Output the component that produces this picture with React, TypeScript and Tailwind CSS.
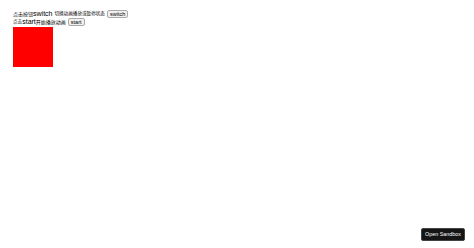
export default function App() {
  return (
    <div className="relative h-[248px] w-[474px] bg-white font-['Liberation_Sans','Noto_Sans_CJK_SC',sans-serif] text-[7px] leading-[8px] text-black">
      <div className="px-[13px] pt-[10px]">
        <div className="flex items-center">
          <span className="text-[5px]">点击按钮</span>
          <span>switch&nbsp;</span>
          <span className="text-[4.6px]">切换动画播放或暂停状态</span>
          <button className="ml-[2px] h-[8px] rounded-[2px] border border-[#aaa] bg-[#f0f0f0] px-[2px] text-[5.5px] leading-[6px]">
            switch
          </button>
        </div>
        <div className="flex items-center">
          <span className="text-[4.6px]">点击</span>
          <span>start</span>
          <span className="text-[5px]">开始播放动画</span>
          <button className="ml-[2px] h-[8px] rounded-[2px] border border-[#aaa] bg-[#f0f0f0] px-[2px] text-[5.5px] leading-[6px]">
            start
          </button>
        </div>
        <div className="mt-[1px] h-[40px] w-[40px] bg-[#ff0000]" />
      </div>
      <button className="absolute bottom-[7px] right-[9px] h-[13px] w-[44px] rounded-[2px] border border-[#444] bg-[#151515] text-[5.4px] leading-[11px] text-white">
        Open Sandbox
      </button>
    </div>
  );
}
